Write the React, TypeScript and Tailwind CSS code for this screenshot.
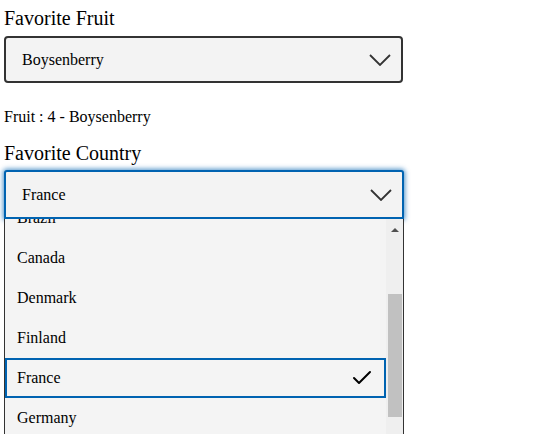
import { Check } from 'lucide-react';

const countries = ['Brazil', 'Canada', 'Denmark', 'Finland', 'France', 'Germany', 'Iceland'];

function Chevron() {
  return (
    <svg width="22" height="12" viewBox="0 0 22 12" fill="none" className="text-[#333333]">
      <path d="M1 1l10 10 10-10" stroke="currentColor" strokeWidth="1.8" />
    </svg>
  );
}

export default function App() {
  const selected = 'France';

  return (
    <div className="h-[434px] overflow-hidden bg-white px-1 font-['Liberation_Serif','Times_New_Roman',serif] text-black">
      {/* Fruit picker */}
      <div className="pt-[7px] text-[20px] leading-[23px]">Favorite Fruit</div>
      <div className="mt-[6px] flex h-[47px] w-[399px] items-center justify-between rounded-[4px] border-2 border-[#333333] bg-[#f3f3f3] pl-4 pr-[10px]">
        <span className="text-[16px]">Boysenberry</span>
        <Chevron />
      </div>

      <p className="mt-[25px] text-[16px] leading-[18px]">Fruit : 4 - Boysenberry</p>

      {/* Country picker, open */}
      <div className="mt-[16px] text-[20px] leading-[23px]">Favorite Country</div>
      <div className="mt-[5px] w-[400px]">
        <div className="flex h-[49px] items-center justify-between rounded-t-[3px] border-2 border-[#0063b1] bg-[#f3f3f3] pl-4 pr-[10px] shadow-[0_0_5px_1px_rgba(0,99,177,0.7)]">
          <span className="text-[16px]">France</span>
          <Chevron />
        </div>
        <div className="flex h-[216px] overflow-hidden border-x border-[#333333] bg-[#f4f4f4]">
          <ul className="-mt-[21px] flex-1">
            {countries.map(c => (
              <li
                key={c}
                className={`flex h-10 items-center justify-between pl-3 pr-3 text-[16px] ${c === selected ? 'border-2 border-[#0063b1] pl-[10px] pr-[10px]' : ''}`}
              >
                <span>{c}</span>
                {c === selected && <Check className="h-6 w-6 text-black" strokeWidth={2} />}
              </li>
            ))}
          </ul>
          <div className="flex w-[17px] flex-col items-center bg-[#efefef]">
            <div className="mt-[9px] h-0 w-0 border-x-[4px] border-b-[4px] border-x-transparent border-b-[#505050]" />
            <div className="mt-[62px] h-[123px] w-[14px] bg-[#c1c1c1]" />
          </div>
        </div>
      </div>
    </div>
  );
}
